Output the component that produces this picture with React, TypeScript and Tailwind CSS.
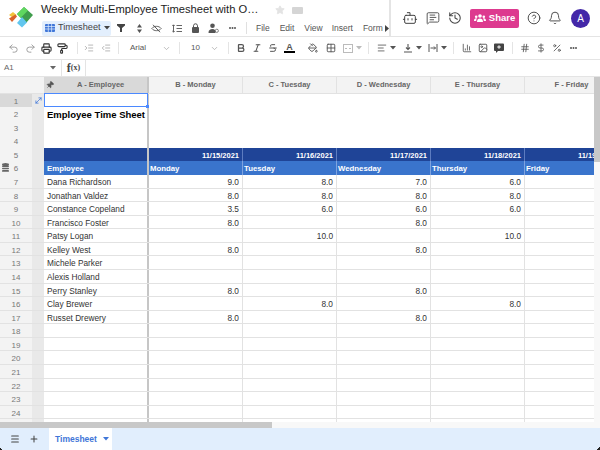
import {
  AlignLeft, Bell, Bold, Bot, ChartColumn, ChevronDown, CircleHelp, DollarSign, Grid2x2, Hash, History,
  Image, IndentDecrease, IndentIncrease, Italic, Menu, MessageSquareText, MoveDiagonal, PaintBucket,
  PaintRoller, Percent, Pin, Plus, Printer, Redo2, Star, Strikethrough, Undo2,
} from "lucide-react";

const rows: [string, string, string, string, string][] = [
  ["Dana Richardson", "9.0", "8.0", "7.0", "6.0"],
  ["Jonathan Valdez", "8.0", "8.0", "8.0", "8.0"],
  ["Constance Copeland", "3.5", "6.0", "6.0", "6.0"],
  ["Francisco Foster", "8.0", "", "8.0", ""],
  ["Patsy Logan", "", "10.0", "", "10.0"],
  ["Kelley West", "8.0", "", "8.0", ""],
  ["Michele Parker", "", "", "", ""],
  ["Alexis Holland", "", "", "", ""],
  ["Perry Stanley", "8.0", "", "8.0", ""],
  ["Clay Brewer", "", "8.0", "", "8.0"],
  ["Russet Drewery", "8.0", "", "8.0", ""],
];

const cols = ["B - Monday", "C - Tuesday", "D - Wednesday", "E - Thursday", "F - Friday"];
const dates = ["11/15/2021", "11/16/2021", "11/17/2021", "11/18/2021", "11/19/2021"];
const days = ["Monday", "Tuesday", "Wednesday", "Thursday", "Friday"];

const Caret = () => (
  <svg width="6" height="3.500" viewBox="0 0 7 4" className="shrink-0">
    <path d="M0 0h7L3.500 4z" fill="currentColor" />
  </svg>
);

const Logo = () => (
  <svg width="41" height="36" viewBox="0 0 41 36">
    <path d="M17 14l7-7 9 8-7 8z" fill="#3f9d4c" />
    <path d="M17 14l7-7 4 3.500-7.500 7.500z" fill="#5fd65f" />
    <path d="M17 23l5-6 5 5.500-5 5z" fill="#62c6ee" />
    <path d="M9 15l4-3 3.500 3-4 2.500z" fill="#f2c23c" />
    <path d="M9 18.500l6.500-4 1.500 2-5 5.500z" fill="#d9622b" />
  </svg>
);

const Cell = ({ children }: { children?: string }) => (
  <div className="w-[94px] shrink-0 border-r border-[#e2e2e2] pr-[3px] text-right text-[#333] overflow-hidden whitespace-nowrap">
    {children}
  </div>
);

const RowHead = ({ n, active, children }: { n: number; active?: boolean; children?: React.ReactNode }) => (
  <div className="flex w-[44px] shrink-0 font-normal">
    <div className={`w-[32px] text-center text-[8px] text-[#777] ${active ? "bg-[#d9d9d9]" : "bg-[#f3f3f3]"}`}>{n}</div>
    <div className="w-[12px] flex items-center justify-center bg-[#e9e9e9]">{children}</div>
  </div>
);

const Freeze = () => <div className="w-[2px] shrink-0 bg-[#c6c6c6]" />;

export default function App() {
  return (
    <div className="relative flex h-[450px] w-[600px] flex-col overflow-hidden bg-white font-['Liberation_Sans',sans-serif] text-[#333]">
      {/* title bar */}
      <div className="flex h-[37px] shrink-0 border-b border-[#e4e4e4]">
        <div className="w-[41px] shrink-0">
          <Logo />
        </div>
        <div className="w-[348px] shrink-0">
          <div className="flex h-[20px] items-center">
            <span className="text-[11.200px] leading-none text-[#222]">Weekly Multi-Employee Timesheet with O…</span>
            <Star size={10} className="ml-[17px] text-[#e3e3e3] fill-[#e3e3e3]" />
            <div className="ml-[7px] h-[7px] w-[11px] rounded-[1px] bg-[#d5d5d5]" />
          </div>
          <div className="flex h-[16px] items-center text-[#555]">
            <div className="ml-[1px] flex h-[15px] w-[69px] items-center rounded-[2px] bg-[#e3effd] pl-[3px]">
              <svg width="10" height="8" viewBox="0 0 10 8"><rect width="10" height="8" rx="1" fill="#3f76d8" /><path d="M0 2.500h10M0 5h10M3.300 0v8M6.600 0v8" stroke="#e3effd" strokeWidth=".7" /></svg>
              <span className="ml-[3px] text-[9.200px] text-[#444]">Timesheet</span>
              <span className="ml-[3px] text-[#444]"><Caret /></span>
            </div>
            <svg className="ml-[6px]" width="9" height="8" viewBox="0 0 9 8"><path d="M0 0h8v1.500L5 4v4H3V4L0 1.500z" fill="#444" /></svg>
            <svg className="ml-[9.500px]" width="7" height="9" viewBox="0 0 7 9"><path d="M3.500 0l2.500 3.500H1zM3.500 9L1 5.500h5z" fill="#555" /></svg>
            <svg className="ml-[8.500px]" width="11" height="9" viewBox="0 0 11 9" fill="none" stroke="#555"><path d="M.8 4.500C3 1.600 8 1.600 10.200 4.500 8 7.400 3 7.400 .8 4.500z" strokeWidth=".9" /><path d="M2 .8l7 7.400" strokeWidth="1" /></svg>
            <svg className="ml-[9.500px]" width="10" height="9" viewBox="0 0 10 9" fill="none" stroke="#555"><path d="M1.500 1v7M.3 2l1.200-1.200L2.700 2M.3 7l1.200 1.200L2.700 7M4.500 1.500H10M4.500 4.500H10M4.500 7.500H10" strokeWidth=".9" /></svg>
            <svg className="ml-[9px]" width="9" height="10" viewBox="0 0 9 10"><rect x="1" y="4" width="7" height="6" rx="1" fill="#555" /><path d="M2.500 4.500V2.800a2 2 0 0 1 4 0v1.700" fill="none" stroke="#555" /></svg>
            <svg className="ml-[8.500px]" width="11" height="10" viewBox="0 0 11 10"><circle cx="4.500" cy="2.800" r="2.300" fill="#555" /><path d="M.5 10c0-3 1.500-4 4-4s3 1 3 4z" fill="#555" /><circle cx="8.800" cy="7.800" r="1.600" fill="none" stroke="#555" strokeWidth=".7" /></svg>
            <svg className="ml-[10px]" width="7" height="2" viewBox="0 0 7 2" fill="#555"><circle cx="1" cy="1" r="1" /><circle cx="3.500" cy="1" r="1" /><circle cx="6" cy="1" r="1" /></svg>
            <div className="ml-[10px] h-[12px] w-px bg-[#e0e0e0]" />
            <div className="ml-[9px] flex items-center text-[8.500px] text-[#555]">
              <span>File</span>
              <span className="ml-[10px]">Edit</span>
              <span className="ml-[10px]">View</span>
              <span className="ml-[9px]">Insert</span>
              <span className="ml-[10px]">Form</span>
              <svg className="ml-[2px]" width="4" height="7" viewBox="0 0 4 7"><path d="M0 0l4 3.500L0 7z" fill="#444" /></svg>
            </div>
          </div>
        </div>
        <div className="h-full w-[2px] shrink-0 bg-[#e4e4e4]" />
        <div className="flex flex-1 items-center text-[#444]">
          <Bot size={16} strokeWidth={1.5} className="ml-[11px]" />
          <MessageSquareText size={14} strokeWidth={1.5} className="ml-[8px]" />
          <History size={14} strokeWidth={1.8} className="ml-[8px]" />
          <div className="ml-[8px] flex h-[19px] w-[49px] items-center justify-center rounded-[2px] bg-[#dd3a8f] text-[9.500px] font-bold text-white">
            <svg className="mr-[3px]" width="12" height="8" viewBox="0 0 12 8" fill="#fff"><circle cx="6" cy="2" r="1.800" /><circle cx="2.200" cy="2.800" r="1.300" /><circle cx="9.800" cy="2.800" r="1.300" /><path d="M3 8c0-2.500 1.200-3.500 3-3.500S9 5.500 9 8zM0 7c0-1.800.8-2.700 2-2.700.4 0 .7.100 1 .3C2.400 5.300 2.200 6 2.200 7zM12 7c0-1.800-.8-2.700-2-2.700-.4 0-.7.100-1 .3.600.7.800 1.400.8 2.400z" /></svg>
            Share
          </div>
          <CircleHelp size={14} strokeWidth={1.6} className="ml-[8px]" />
          <Bell size={14} strokeWidth={1.6} className="ml-[7px]" />
          <div className="ml-[9px] flex h-[19px] w-[19px] items-center justify-center rounded-full bg-[#4327a8] text-[10px] text-white">A</div>
        </div>
      </div>

      {/* format toolbar */}
      <div className="flex h-[23px] shrink-0 items-center border-b border-[#e4e4e4] pl-[8px] text-[#555]">
        <Undo2 size={11} className="text-[#999]" />
        <Redo2 size={11} className="ml-[6px] text-[#999]" />
        <Printer size={11} strokeWidth={2.4} className="ml-[5px] text-[#333]" />
        <PaintRoller size={11} strokeWidth={2.4} className="ml-[5px] text-[#333]" />
        <div className="ml-[9px] h-[12px] w-px bg-[#e4e4e4]" />
        <IndentIncrease size={10} className="ml-[6px] text-[#aaa]" />
        <IndentDecrease size={10} className="ml-[7px] text-[#aaa]" />
        <div className="ml-[7px] h-[12px] w-px bg-[#e4e4e4]" />
        <span className="ml-[11px] w-[32px] text-[8px]">Arial</span>
        <ChevronDown size={9} className="text-[#aaa]" />
        <div className="ml-[8px] h-[12px] w-px bg-[#e4e4e4]" />
        <span className="ml-[11px] w-[19px] text-[8px]">10</span>
        <ChevronDown size={9} className="text-[#aaa]" />
        <div className="ml-[9px] h-[12px] w-px bg-[#e4e4e4]" />
        <Bold size={10} strokeWidth={3} className="ml-[7px]" />
        <Italic size={10} strokeWidth={2.5} className="ml-[6px]" />
        <Strikethrough size={10} strokeWidth={2.4} className="ml-[6px]" />
        <div className="ml-[6px] flex w-[11px] flex-col items-center leading-none">
          <span className="text-[9px] leading-[8px] font-bold">A</span>
          <div className="h-[2px] w-[11px] bg-black" />
        </div>
        <PaintBucket size={10} strokeWidth={2.2} className="ml-[13px]" />
        <Grid2x2 size={10} strokeWidth={2.2} className="ml-[8px]" />
        <svg className="ml-[7px]" width="10" height="9" viewBox="0 0 10 9" fill="none" stroke="#bbb"><rect x=".5" y=".5" width="9" height="8" /><path d="M2 4.500h2M6 4.500h2" /></svg>
        <span className="ml-[3px] text-[#bbb]"><Caret /></span>
        <div className="ml-[6px] h-[12px] w-px bg-[#e4e4e4]" />
        <AlignLeft size={10} className="ml-[8px]" />
        <span className="ml-[3px]"><Caret /></span>
        <svg className="ml-[7px]" width="10" height="10" viewBox="0 0 10 10" fill="none" stroke="#555"><path d="M5 1v5.500M3 4.500l2 2 2-2M1 9h8" strokeWidth="1.100" /></svg>
        <span className="ml-[3px]"><Caret /></span>
        <svg className="ml-[6px]" width="10" height="10" viewBox="0 0 10 10" fill="none" stroke="#555"><path d="M1 1v8M9 1v8M2.500 5h5M6 3.500L7.500 5 6 6.500" strokeWidth="1" /></svg>
        <span className="ml-[3px]"><Caret /></span>
        <div className="ml-[6px] h-[12px] w-px bg-[#e4e4e4]" />
        <ChartColumn size={10} className="ml-[8px]" />
        <Image size={10} strokeWidth={2.2} className="ml-[6px]" />
        <svg className="ml-[6px]" width="10" height="10" viewBox="0 0 10 10"><path d="M0 1.500A1 1 0 0 1 1 .5h8a1 1 0 0 1 1 1V7a1 1 0 0 1-1 1H4L2 10V8H1a1 1 0 0 1-1-1z" fill="#444" /><path d="M5 2.300v3.500M3.200 4h3.600" stroke="#fff" /></svg>
        <div className="ml-[8px] h-[12px] w-px bg-[#e4e4e4]" />
        <Hash size={10} className="ml-[7px]" />
        <DollarSign size={10} className="ml-[6px]" />
        <Percent size={10} className="ml-[6px]" />
        <svg className="ml-[8px]" width="7" height="2" viewBox="0 0 7 2" fill="#555"><circle cx="1" cy="1" r="1" /><circle cx="3.500" cy="1" r="1" /><circle cx="6" cy="1" r="1" /></svg>
      </div>

      {/* formula bar */}
      <div className="flex h-[17px] shrink-0 items-center border-b border-[#e4e4e4] text-[#666]">
        <div className="flex h-full w-[62px] items-center justify-between border-r border-[#e4e4e4] pl-[4px] pr-[5px] text-[8px]">
          A1
          <Caret />
        </div>
        <div className="flex h-full w-[24px] items-center justify-center border-r border-[#e4e4e4] font-['Liberation_Serif',serif] text-[12px] font-bold text-[#444]">
          f<span className="text-[8px]">(x)</span>
        </div>
      </div>

      {/* sheet */}
      <div className="flex min-h-0 flex-1">
        <div className="min-w-0 flex-1 overflow-hidden text-[8.300px] leading-[15px]">
          {/* column letters */}
          <div className="flex h-[16.500px] border-b border-[#e2e2e2] bg-[#f3f3f3] text-[7.500px] font-bold text-[#666]">
            <div className="w-[44px] shrink-0 bg-[#f3f3f3]" />
            <div className="flex w-[103px] shrink-0 items-center bg-[#d9d9d9] pl-[2px]">
              <Pin size={8} className="fill-[#555] text-[#555] rotate-45" />
              <span className="ml-[23px]">A - Employee</span>
            </div>
            <Freeze />
            {cols.map((c) => (
              <div key={c} className="flex w-[94px] shrink-0 items-center justify-center border-r border-[#e2e2e2]">{c}</div>
            ))}
          </div>

          {[1, 2, 3, 4].map((n) => (
            <div key={n} className="flex h-[13.580px]">
              <RowHead n={n} active={n === 1}>
                {n === 1 && <MoveDiagonal size={9} strokeWidth={2} className="text-[#3f76d8]" />}
              </RowHead>
              <div className="w-[103px] shrink-0 whitespace-nowrap pl-[3px] text-[9.500px] font-bold text-black">
                {n === 2 ? "Employee Time Sheet" : ""}
              </div>
              <Freeze />
              <div className="flex-1" />
            </div>
          ))}

          <div className="flex h-[13.580px] text-[7.500px] font-bold text-white">
            <RowHead n={5} />
            <div className="w-[103px] shrink-0 bg-[#1f4497]" />
            <Freeze />
            {dates.map((d) => (
              <div key={d} className="w-[94px] shrink-0 whitespace-nowrap border-r border-[#5d7cc0] bg-[#1f4497] pr-[3px] text-right">{d}</div>
            ))}
          </div>

          <div className="flex h-[13.580px] text-[7.800px] font-bold text-white">
            <RowHead n={6} />
            <div className="w-[103px] shrink-0 bg-[#3a74cc] pl-[3px]">Employee</div>
            <Freeze />
            {days.map((d) => (
              <div key={d} className="w-[94px] shrink-0 border-r border-[#7ea3df] bg-[#3a74cc] pl-[1px]">{d}</div>
            ))}
          </div>

          {rows.map((r, i) => (
            <div key={r[0]} className="flex h-[13.580px] border-b border-[#e2e2e2]">
              <RowHead n={i + 7} />
              <div className="w-[103px] shrink-0 whitespace-nowrap pl-[3px] text-[#333]">{r[0]}</div>
              <Freeze />
              <Cell>{r[1]}</Cell>
              <Cell>{r[2]}</Cell>
              <Cell>{r[3]}</Cell>
              <Cell>{r[4]}</Cell>
              <Cell />
            </div>
          ))}

          {[18, 19, 20, 21, 22, 23, 24, 25].map((n) => (
            <div key={n} className="flex h-[13.580px] border-b border-[#e2e2e2]">
              <RowHead n={n} />
              <div className="w-[103px] shrink-0" />
              <Freeze />
              <Cell />
              <Cell />
              <Cell />
              <Cell />
              <Cell />
            </div>
          ))}
        </div>
        {/* vertical scrollbar */}
        <div className="w-[6px] shrink-0 bg-[#f8f8f8]">
          <div className="h-[85px] bg-[#c8c8c8]" />
        </div>
      </div>

      {/* horizontal scrollbar */}
      <div className="h-[6px] shrink-0 bg-[#f8f8f8]">
        <div className="h-full w-[272px] bg-[#c8c8c8]" />
      </div>

      {/* tab bar */}
      <div className="flex h-[22px] shrink-0 items-stretch bg-[#e1eefd] text-[#444]">
        <div className="flex w-[49px] items-center pl-[10px]">
          <Menu size={10} strokeWidth={2.5} />
          <Plus size={10} strokeWidth={2.5} className="ml-[9px]" />
        </div>
        <div className="flex w-[63px] items-center bg-white pl-[6px] text-[8.500px] font-bold text-[#3f76d8]">
          Timesheet
          <span className="ml-[6px]"><Caret /></span>
        </div>
      </div>

      {/* selected cell outline, over the grid */}
      <div className="absolute left-[44px] top-[93px] h-[14px] w-[104px] border border-[#4b89ff]" />
      <div className="absolute left-[146px] top-[105px] h-[3px] w-[3px] bg-[#4b89ff]" />
      {/* filter-view row marker */}
      <svg className="absolute left-[2px] top-[163px]" width="7" height="9" viewBox="0 0 7 9" fill="#666"><ellipse cx="3.500" cy="1.500" rx="3.500" ry="1.500" /><rect y="2.500" width="7" height="1.500" rx=".7" /><rect y="4.700" width="7" height="1.500" rx=".7" /><rect y="7" width="7" height="1.800" rx=".9" /></svg>
      {/* window corners */}
      <div className="absolute bottom-0 left-0 h-[3px] w-[3px] bg-[linear-gradient(45deg,#222_50%,transparent_50%)]" />
      <div className="absolute bottom-0 right-0 h-[3px] w-[3px] bg-[linear-gradient(-45deg,#222_50%,transparent_50%)]" />
    </div>
  );
}
